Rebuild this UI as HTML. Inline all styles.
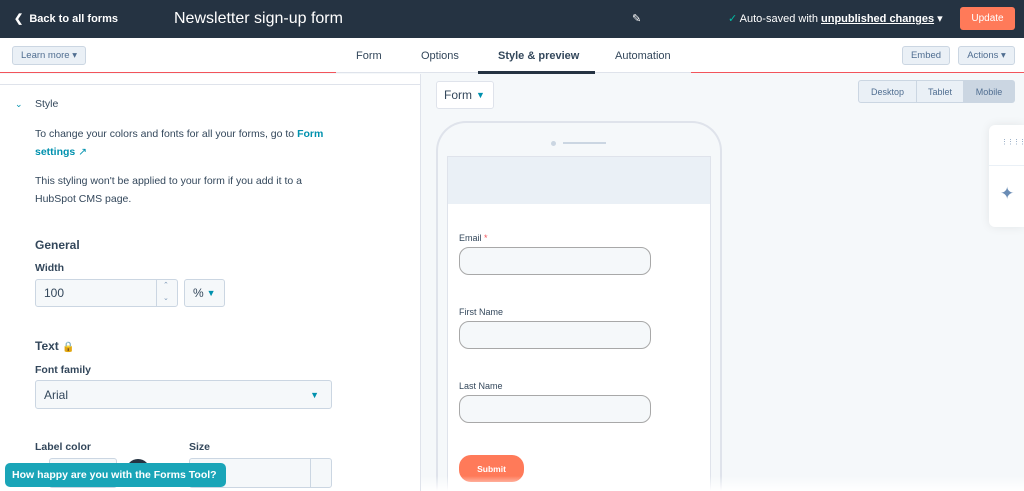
<!DOCTYPE html>
<html><head><style>
*{box-sizing:border-box;margin:0;padding:0}
html,body{width:1024px;height:491px;overflow:hidden}
body{font-family:"Liberation Sans",sans-serif;background:#f5f8fa;position:relative;color:#33475b}
.abs{position:absolute}
.top{left:0;top:0;width:1024px;height:38px;background:#253342;color:#fff}
.bar2{left:0;top:38px;width:1024px;height:35px;background:#fff;border-bottom:1px solid #dfe3eb}
.btn{position:absolute;background:#eaf0f6;border:1px solid #cbd6e2;border-radius:3px;font-size:9.5px;color:#506e91;display:flex;align-items:center;justify-content:center}
.tab{position:absolute;top:50px;font-size:11px;color:#33475b}
.left{left:0;top:74px;width:421px;height:417px;background:#fff;border-right:1px solid #dfe3eb}
.p{font-size:10.5px;line-height:18px;color:#33475b}
.h{font-size:12px;font-weight:bold;color:#33475b}
.lbl{font-size:10.5px;font-weight:bold;color:#33475b}
.inp{position:absolute;background:#f5f8fa;border:1px solid #cbd6e2;border-radius:3px;font-size:12px;display:flex;align-items:center;padding-left:8px}
.fin{position:absolute;left:459px;width:192px;height:28px;border:1px solid #a8a8a8;border-radius:10px;background:#f5f8fa}
.fl{position:absolute;left:459px;font-size:9px;color:#33475b}
.step{position:absolute;font-size:7px;color:#7c98b6}
</style></head><body>
<div class="abs top">
  <div class="abs" style="left:14px;top:12px;font-size:11px;font-weight:bold">&#10094;&nbsp; Back to all forms</div>
  <div class="abs" style="left:174px;top:10px;font-size:16px">Newsletter sign-up form</div>
  <div class="abs" style="left:632px;top:12px;font-size:11px">&#9998;</div>
  <div class="abs" style="left:728px;top:12px;font-size:11px"><span style="color:#00bda5">&#10003;</span> Auto-saved with <u style="font-weight:bold">unpublished changes</u> &#9662;</div>
  <div class="abs" style="left:960px;top:7px;width:55px;height:23px;background:#ff7a59;border-radius:3px;font-size:10px;display:flex;align-items:center;justify-content:center">Update</div>
</div>
<div class="abs bar2"></div>
<div class="btn" style="left:12px;top:46px;width:74px;height:19px">Learn more &#9662;</div>
<div class="tab" style="left:356px">Form</div>
<div class="tab" style="left:421px">Options</div>
<div class="tab" style="left:498px;font-weight:bold">Style &amp; preview</div>
<div class="tab" style="left:615px">Automation</div>
<div class="abs" style="left:478px;top:71px;width:117px;height:3px;background:#253342"></div>
<div class="abs" style="left:0;top:72px;width:336px;height:1px;background:#f2545b"></div>
<div class="abs" style="left:691px;top:72px;width:333px;height:1px;background:#f2545b"></div>
<div class="btn" style="left:902px;top:46px;width:48px;height:19px">Embed</div>
<div class="btn" style="left:958px;top:46px;width:57px;height:19px">Actions &#9662;</div>

<div class="abs left">
  <div class="abs" style="left:0;top:10px;width:421px;height:1px;background:#dfe3eb"></div>
  <div class="abs" style="left:15px;top:25px;font-size:9px;color:#0091ae">&#8964;</div>
  <div class="abs p" style="left:35px;top:21px">Style</div>
  <div class="abs p" style="left:35px;top:51px;width:310px">To change your colors and fonts for all your forms, go to <b style="color:#0091ae">Form settings</b> <span style="color:#0091ae">&#8599;</span></div>
  <div class="abs p" style="left:35px;top:98px;width:300px">This styling won't be applied to your form if you add it to a HubSpot CMS page.</div>
  <div class="abs h" style="left:35px;top:164px">General</div>
  <div class="abs lbl" style="left:35px;top:188px">Width</div>
  <div class="inp" style="left:35px;top:205px;width:143px;height:28px">100</div>
  <div class="abs" style="left:156px;top:205px;width:1px;height:28px;background:#cbd6e2"></div>
  <div class="step" style="left:163px;top:207px">&#8963;</div><div class="step" style="left:163px;top:220px">&#8964;</div>
  <div class="inp" style="left:184px;top:205px;width:41px;height:28px">% <span style="color:#0091ae;font-size:9px;margin-left:3px">&#9660;</span></div>
  <div class="abs h" style="left:35px;top:265px">Text <span style="font-size:10px">&#128274;</span></div>
  <div class="abs lbl" style="left:35px;top:290px">Font family</div>
  <div class="inp" style="left:35px;top:306px;width:297px;height:29px">Arial<span class="abs" style="right:12px;color:#0091ae;font-size:9px">&#9660;</span></div>
  <div class="abs lbl" style="left:35px;top:367px">Label color</div>
  <div class="abs lbl" style="left:189px;top:367px">Size</div>
  <div class="inp" style="left:49px;top:384px;width:68px;height:30px"></div>
  <div class="abs" style="left:126px;top:385px;width:24px;height:24px;border-radius:50%;background:#253342"></div>
  <div class="inp" style="left:189px;top:384px;width:143px;height:30px"></div>
  <div class="abs" style="left:310px;top:384px;width:1px;height:30px;background:#cbd6e2"></div>
</div>
<div class="abs" style="left:5px;top:463px;width:221px;height:24px;background:#1aa5b8;border-radius:5px;color:#fff;font-size:10.5px;font-weight:bold;display:flex;align-items:center;padding-left:7px">How happy are you with the Forms Tool?</div>

<div class="abs" style="left:436px;top:81px;width:58px;height:28px;background:#fff;border:1px solid #dfe3eb;border-radius:3px;font-size:12px;display:flex;align-items:center;padding-left:7px">Form <span style="color:#0091ae;font-size:9px;margin-left:4px">&#9660;</span></div>
<div class="abs" style="left:858px;top:80px;width:157px;height:23px;border:1px solid #cbd6e2;border-radius:3px;background:#eaf0f6;display:flex;font-size:9px;color:#506e91">
  <div style="width:58px;display:flex;align-items:center;justify-content:center;border-right:1px solid #cbd6e2">Desktop</div>
  <div style="width:47px;display:flex;align-items:center;justify-content:center;border-right:1px solid #cbd6e2">Tablet</div>
  <div style="flex:1;display:flex;align-items:center;justify-content:center;background:#cbd6e2">Mobile</div>
</div>

<div class="abs" style="left:436px;top:121px;width:286px;height:370px;border:2px solid #dfe3eb;border-bottom:none;border-radius:30px 30px 0 0;background:#f5f8fa"></div>
<div class="abs" style="left:551px;top:141px;width:5px;height:5px;border-radius:50%;background:#cbd6e2"></div>
<div class="abs" style="left:563px;top:142px;width:43px;height:2px;background:#cbd6e2"></div>
<div class="abs" style="left:447px;top:156px;width:264px;height:335px;background:#fff;border:1px solid #dfe3eb;border-bottom:none"></div>
<div class="abs" style="left:448px;top:157px;width:262px;height:47px;background:#eaf0f6"></div>
<div class="fl" style="top:233px">Email <span style="color:#f2545b">*</span></div>
<div class="fin" style="top:247px"></div>
<div class="fl" style="top:307px">First Name</div>
<div class="fin" style="top:321px"></div>
<div class="fl" style="top:381px">Last Name</div>
<div class="fin" style="top:395px"></div>
<div class="abs" style="left:459px;top:455px;width:65px;height:27px;border-radius:12px;background:#ff7a59;color:#fff;font-size:8.5px;font-weight:bold;display:flex;align-items:center;justify-content:center">Submit</div>
<div class="abs" style="left:421px;top:476px;width:603px;height:15px;background:linear-gradient(rgba(255,255,255,0),#fff)"></div>

<div class="abs" style="left:989px;top:125px;width:35px;height:102px;background:#fff;border-radius:6px 0 0 6px;box-shadow:0 0 10px rgba(0,0,0,0.08)">
  <div class="abs" style="left:0;top:40px;width:35px;height:1px;background:#eaf0f6"></div>
  <div class="abs" style="left:12px;top:13px;font-size:7px;color:#7c98b6;letter-spacing:-1px">&#8942;&#8942;&#8942;&#8942;</div>
  <div class="abs" style="left:11px;top:59px;font-size:17px;color:#6a8cb5">&#10022;</div>
</div>
</body></html>
